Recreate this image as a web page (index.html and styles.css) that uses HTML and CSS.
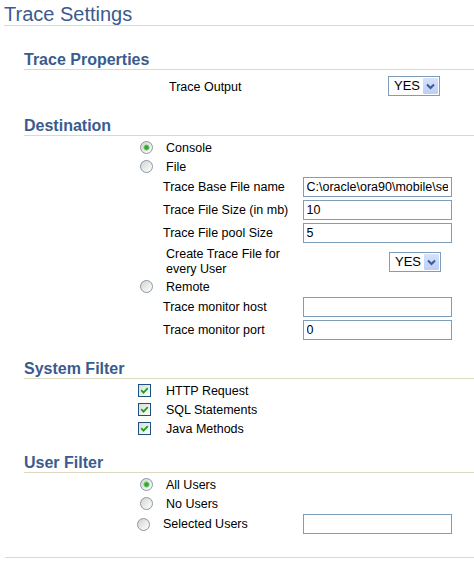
FILE: index.html
```html
<!DOCTYPE html>
<html lang="en">
<head>
<meta charset="utf-8">
<title>Trace Settings</title>
<link rel="stylesheet" href="styles.css">
</head>
<body>
<h1 class="page-title">Trace Settings</h1>

<section class="section section--props">
  <h2 class="section-title">Trace Properties</h2>
  <div class="output-row">
    <span class="output-label">Trace Output</span>
    <span class="select">
      <span class="select-value">YES</span>
      <span class="select-btn"><svg width="15" height="16" viewBox="0 0 15 16"><path d="M4 6.5 L7.5 10 L11 6.5" fill="none" stroke="#3f5a8e" stroke-width="2"/></svg></span>
    </span>
  </div>
</section>

<section class="section section--dest">
  <h2 class="section-title">Destination</h2>
  <div class="body body--dest">
    <label class="choice"><input class="radio" type="radio" name="dest" checked><span>Console</span></label>
    <label class="choice"><input class="radio" type="radio" name="dest"><span>File</span></label>
    <div class="field field--first"><span class="field-label">Trace Base File name</span><input class="text" type="text" value="C:\oracle\ora90\mobile\server\bin\trace"></div>
    <div class="field"><span class="field-label">Trace File Size (in mb)</span><input class="text" type="text" value="10"></div>
    <div class="field"><span class="field-label">Trace File pool Size</span><input class="text" type="text" value="5"></div>
    <div class="create-row">
      <span class="create-label">Create Trace File for<br>every User</span>
      <span class="select">
        <span class="select-value">YES</span>
        <span class="select-btn"><svg width="15" height="16" viewBox="0 0 15 16"><path d="M4 6.5 L7.5 10 L11 6.5" fill="none" stroke="#3f5a8e" stroke-width="2"/></svg></span>
      </span>
    </div>
    <label class="choice choice--remote"><input class="radio" type="radio" name="dest"><span>Remote</span></label>
    <div class="field field--first"><span class="field-label">Trace monitor host</span><input class="text" type="text" value=""></div>
    <div class="field"><span class="field-label">Trace monitor port</span><input class="text" type="text" value="0"></div>
  </div>
</section>

<section class="section section--sys">
  <h2 class="section-title">System Filter</h2>
  <div class="body body--sys">
    <label class="check-row"><span class="checkbox"><svg width="11" height="11" viewBox="0 0 11 11"><path d="M2.2 5.2 L4.5 7.6 L8.8 3.2" fill="none" stroke="#21a121" stroke-width="1.9"/></svg></span><span>HTTP Request</span></label>
    <label class="check-row"><span class="checkbox"><svg width="11" height="11" viewBox="0 0 11 11"><path d="M2.2 5.2 L4.5 7.6 L8.8 3.2" fill="none" stroke="#21a121" stroke-width="1.9"/></svg></span><span>SQL Statements</span></label>
    <label class="check-row"><span class="checkbox"><svg width="11" height="11" viewBox="0 0 11 11"><path d="M2.2 5.2 L4.5 7.6 L8.8 3.2" fill="none" stroke="#21a121" stroke-width="1.9"/></svg></span><span>Java Methods</span></label>
  </div>
</section>

<section class="section section--user">
  <h2 class="section-title">User Filter</h2>
  <div class="body body--user">
    <label class="choice"><input class="radio" type="radio" name="users" checked><span>All Users</span></label>
    <label class="choice"><input class="radio" type="radio" name="users"><span>No Users</span></label>
    <div class="selected-row">
      <label class="selected-choice"><input class="radio" type="radio" name="users"><span>Selected Users</span></label>
      <input class="text" type="text" value="">
    </div>
  </div>
</section>

<div class="footer-line"></div>
</body>
</html>
```

FILE: styles.css
```css
* { box-sizing: border-box; }

html, body {
  margin: 0;
  padding: 0;
  background: #ffffff;
}

body {
  width: 474px;
  overflow: hidden;
  font-family: "Liberation Sans", Arial, sans-serif;
  font-size: 12.5px;
  color: #000000;
}

.page-title {
  margin: 0 0 0 4px;
  padding-top: 3px;
  font-size: 20px;
  line-height: 22px;
  font-weight: normal;
  color: #3a5b8e;
  border-bottom: 1px solid #dcdac0;
}

.section-title {
  margin: 0 0 0 24px;
  font-size: 16px;
  line-height: 18px;
  font-weight: bold;
  color: #3a5b8e;
  border-bottom: 1px solid #dcdac0;
}

.section--props { margin-top: 25px; }
.section--dest { margin-top: 21px; }
.section--sys { margin-top: 17px; }
.section--user { margin-top: 16px; }

/* Trace Properties */
.output-row {
  display: flex;
  align-items: center;
  margin-top: 6px;
  height: 20px;
  padding-left: 169px;
}
.output-label {
  width: 219px;
  padding-top: 2px;
}

/* Select */
.select {
  display: flex;
  align-items: center;
  justify-content: space-between;
  width: 52px;
  height: 20px;
  border: 1px solid #7f9db9;
  background: #ffffff;
  padding: 1px 1px 1px 5px;
}
.select-value {
  line-height: 16px;
  font-size: 13px;
}
.select-btn {
  display: flex;
  width: 15px;
  height: 16px;
  background: linear-gradient(180deg, #d6e2fc 0%, #bccffa 100%);
  border-radius: 1px;
}

/* Radio choices */
.body--dest { margin-top: 2px; }
.body--sys { margin-top: 2px; }
.body--user { margin-top: 2px; }

.choice {
  display: flex;
  align-items: center;
  height: 19px;
  padding-left: 140px;
  gap: 13px;
}

.radio {
  appearance: none;
  -webkit-appearance: none;
  margin: 0;
  width: 13px;
  height: 13px;
  border-radius: 50%;
  border: 1px solid #8797ab;
  background: linear-gradient(135deg, #d2d4d0 0%, #eeeeea 60%, #ffffff 100%);
  flex: none;
}
.radio:checked {
  background:
    radial-gradient(circle at 50% 50%, #2a9f2a 0, #37b037 1.8px, #8fd48f 2.8px, rgba(255,255,255,0) 3.4px),
    linear-gradient(135deg, #d2d4d0 0%, #eeeeea 60%, #ffffff 100%);
}

/* Fields */
.field {
  display: flex;
  align-items: flex-start;
  height: 23px;
  padding-left: 163px;
}
.field--first { margin-top: 1px; }
.field-label {
  width: 139.5px;
  line-height: 20px;
}

.text {
  width: 149px;
  height: 20px;
  margin: 0;
  padding: 0 3px;
  border: 1px solid #7f9db9;
  font-family: "Liberation Sans", Arial, sans-serif;
  font-size: 12.5px;
  color: #000000;
  background: #ffffff;
  outline: none;
}

.create-row {
  display: flex;
  align-items: center;
  height: 31px;
  padding-left: 166px;
}
.create-label {
  width: 223px;
  line-height: 15px;
  padding-top: 1px;
  align-self: flex-start;
}

/* Checkboxes */
.check-row {
  display: flex;
  align-items: center;
  height: 19px;
  padding-left: 138px;
  gap: 15px;
}
.checkbox {
  display: flex;
  width: 13px;
  height: 13px;
  border: 1px solid #1c5180;
  background: linear-gradient(135deg, #dcdcd7 0%, #f6f6f3 75%, #ffffff 100%);
  flex: none;
}

/* Selected users */
.selected-row {
  display: flex;
  align-items: center;
  margin-top: 1px;
  height: 20px;
}
.selected-choice {
  display: flex;
  align-items: center;
  gap: 13px;
  padding-left: 137px;
  width: 302.5px;
}

.footer-line {
  margin: 23px 0 0 5px;
  border-top: 1px solid #dcdac0;
}
```
